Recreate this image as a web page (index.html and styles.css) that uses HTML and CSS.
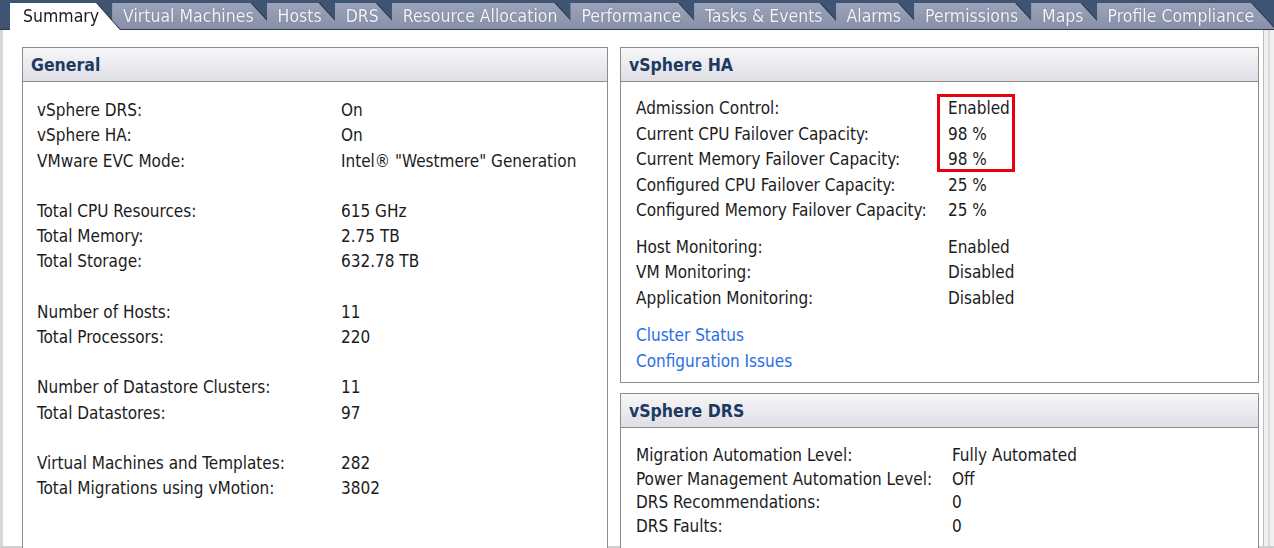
FILE: index.html
```html
<!DOCTYPE html>
<html>
<head>
<meta charset="utf-8">
<link rel="stylesheet" href="styles.css">
</head>
<body>
<div class="window">
  <div class="tabbar">
    <div class="tab active"><span class="tab-in">Summary</span></div>
    <div class="tab"><span class="tab-in">Virtual Machines</span></div>
    <div class="tab"><span class="tab-in">Hosts</span></div>
    <div class="tab"><span class="tab-in">DRS</span></div>
    <div class="tab"><span class="tab-in">Resource Allocation</span></div>
    <div class="tab"><span class="tab-in">Performance</span></div>
    <div class="tab"><span class="tab-in">Tasks &amp; Events</span></div>
    <div class="tab"><span class="tab-in">Alarms</span></div>
    <div class="tab"><span class="tab-in">Permissions</span></div>
    <div class="tab"><span class="tab-in">Maps</span></div>
    <div class="tab"><span class="tab-in">Profile Compliance</span></div>
  </div>
  <div class="content">
    <div class="main">
      <section class="panel general">
        <div class="panel-head">General</div>
        <div class="panel-body">
          <div class="group">
            <div class="kv"><span>vSphere DRS:</span><span>On</span></div>
            <div class="kv"><span>vSphere HA:</span><span>On</span></div>
            <div class="kv"><span>VMware EVC Mode:</span><span>Intel® "Westmere" Generation</span></div>
          </div>
          <div class="group">
            <div class="kv"><span>Total CPU Resources:</span><span>615 GHz</span></div>
            <div class="kv"><span>Total Memory:</span><span>2.75 TB</span></div>
            <div class="kv"><span>Total Storage:</span><span>632.78 TB</span></div>
          </div>
          <div class="group">
            <div class="kv"><span>Number of Hosts:</span><span>11</span></div>
            <div class="kv"><span>Total Processors:</span><span>220</span></div>
          </div>
          <div class="group">
            <div class="kv"><span>Number of Datastore Clusters:</span><span>11</span></div>
            <div class="kv"><span>Total Datastores:</span><span>97</span></div>
          </div>
          <div class="group">
            <div class="kv"><span>Virtual Machines and Templates:</span><span>282</span></div>
            <div class="kv"><span>Total Migrations using vMotion:</span><span>3802</span></div>
          </div>
        </div>
      </section>
      <div class="col-right">
        <section class="panel ha">
          <div class="panel-head">vSphere HA</div>
          <div class="panel-body">
            <div class="group">
              <div class="kv"><span>Admission Control:</span><span>Enabled</span></div>
              <div class="kv"><span>Current CPU Failover Capacity:</span><span>98 %</span></div>
              <div class="kv"><span>Current Memory Failover Capacity:</span><span>98 %</span></div>
              <div class="kv"><span>Configured CPU Failover Capacity:</span><span>25 %</span></div>
              <div class="kv"><span>Configured Memory Failover Capacity:</span><span>25 %</span></div>
              <div class="highlight"></div>
            </div>
            <div class="group">
              <div class="kv"><span>Host Monitoring:</span><span>Enabled</span></div>
              <div class="kv"><span>VM Monitoring:</span><span>Disabled</span></div>
              <div class="kv"><span>Application Monitoring:</span><span>Disabled</span></div>
            </div>
            <div class="group links">
              <a class="link">Cluster Status</a>
              <a class="link">Configuration Issues</a>
            </div>
          </div>
        </section>
        <section class="panel drs">
          <div class="panel-head">vSphere DRS</div>
          <div class="panel-body">
            <div class="kv"><span>Migration Automation Level:</span><span>Fully Automated</span></div>
            <div class="kv"><span>Power Management Automation Level:</span><span>Off</span></div>
            <div class="kv"><span>DRS Recommendations:</span><span>0</span></div>
            <div class="kv"><span>DRS Faults:</span><span>0</span></div>
          </div>
        </section>
      </div>
    </div>
    <div class="scrollbar"><div class="track"></div></div>
  </div>
</div>
</body>
</html>
```
FILE: styles.css
```css
* { box-sizing: border-box; }
html, body { margin: 0; padding: 0; background: #ffffff; }
body {
  font-family: "DejaVu Sans Condensed", "DejaVu Sans", sans-serif;
  font-stretch: condensed;
  font-size: 17px;
  color: #1c1c1c;
}
.window {
  width: 1274px;
  height: 548px;
  overflow: hidden;
  display: flex;
  flex-direction: column;
}
.tabbar {
  height: 30px;
  flex: none;
  background: #3e5472;
  display: flex;
  align-items: flex-end;
  padding-left: 10px;
  border-bottom: 1px solid #2c3b52;
}
.tab {
  height: 26px;
  margin-right: -8px;
  filter: drop-shadow(1.5px 0.5px 0 #1d2838);
  position: relative;
  z-index: 1;
}
.tab-in {
  display: flex;
  align-items: center;
  height: 100%;
  padding: 0 21px 1px 11px;
  background: linear-gradient(#9aa3b9, #8790a8);
  color: #f3f4f8;
  text-shadow: 0 0 1px #5a6278;
  font-size: 17.5px;
  white-space: nowrap;
  clip-path: polygon(0 0, calc(100% - 24px) 0, 100% 100%, 0 100%);
}
.tab.active { z-index: 3; height: 27px; margin-bottom: -1px; }
.tab.active .tab-in {
  background: #ffffff;
  color: #1a1a1a;
  text-shadow: none;
  padding-left: 13px;
}
.content {
  flex: 1;
  display: flex;
  border-left: 3px solid #d6d6d6;
  min-height: 0;
  border-bottom: 2px solid #cfcfcf;
}
.main {
  flex: 1;
  display: flex;
  gap: 12px;
  padding: 17px 4px 0 19px;
  align-items: flex-start;
  min-height: 0;
}
.scrollbar {
  width: 12px;
  flex: none;
  border-left: 1px solid #bdbdbd;
  background: #f0f0f0;
  display: flex;
  padding-left: 4px;
}
.track { width: 2px; background: #d8d8d8; }
.panel {
  border: 1.5px solid #8c8c8c;
  background: #fff;
}
.general { width: 586px; height: 520px; flex: none; }
.col-right { width: 639px; flex: none; display: flex; flex-direction: column; gap: 10px; }
.panel-head {
  height: 34px;
  background: linear-gradient(#f7f7f9, #dedee5);
  border-bottom: 1.5px solid #8c8c8c;
  padding-left: 8px;
  display: flex;
  align-items: center;
  font-weight: bold;
  font-size: 17.5px;
  color: #1d3a62;
}
.panel-body { padding: 16px 0 0 14px; }
.kv {
  display: grid;
  grid-template-columns: 304px 1fr;
  line-height: 25.3px;
  white-space: nowrap;
}
.general .group + .group { margin-top: 25px; }
.ha .panel-body { padding: 14px 0 8px 15px; position: relative; }
.ha .kv { grid-template-columns: 312px 1fr; line-height: 25.5px; }
.ha .group { position: relative; }
.ha .group + .group { margin-top: 11px; }
.ha .group.links { margin-top: 12px; }
.highlight {
  position: absolute;
  left: 301px;
  top: -2px;
  width: 78px;
  height: 78px;
  border: 3px solid #e60012;
}
.links { display: flex; flex-direction: column; }
.link {
  color: #2a6ee6;
  line-height: 25.5px;
  cursor: pointer;
}
.drs .panel-body { padding: 16px 0 40px 15px; }
.drs .kv { grid-template-columns: 316px 1fr; line-height: 23.6px; }
```
